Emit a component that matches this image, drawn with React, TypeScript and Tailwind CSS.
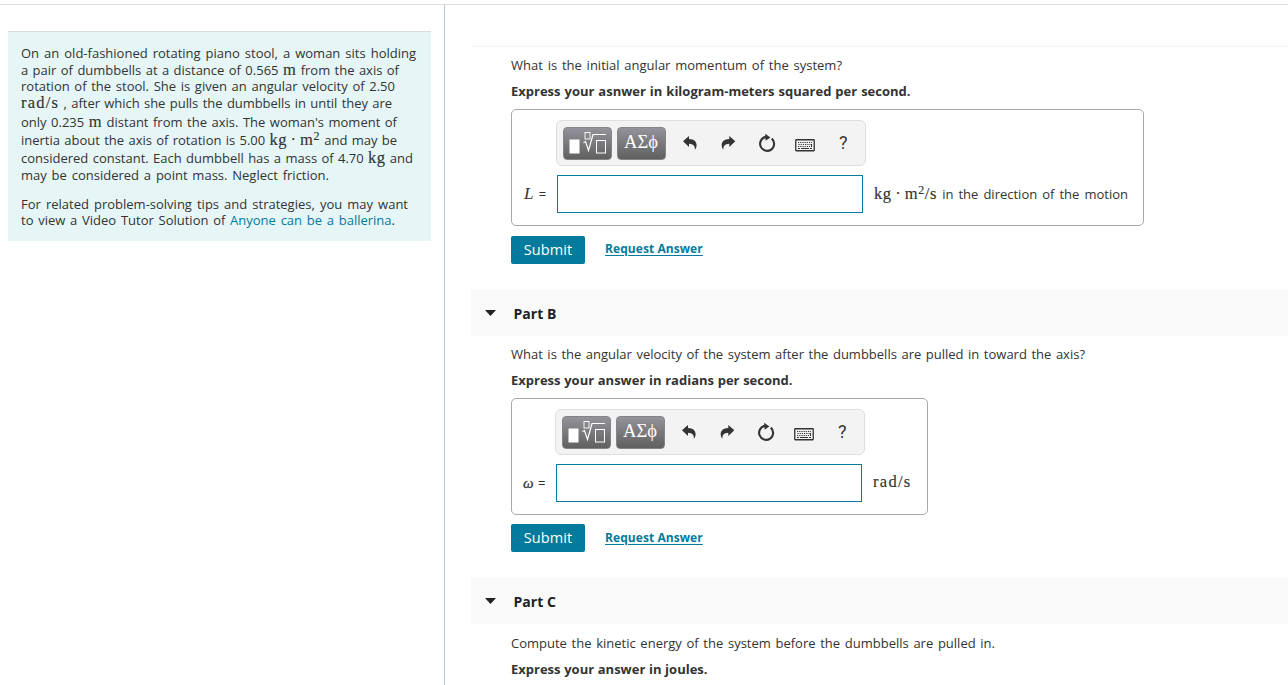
import type { ReactNode } from 'react';
import clsx from 'clsx';

function Line({ className, children }: { className: string; children: ReactNode }) {
  return (
    <div className={clsx('whitespace-nowrap leading-4 [text-align-last:justify]', className)}>
      {children}
    </div>
  );
}

function Unit({ className = 'tracking-[0.5px]', children }: { className?: string; children: ReactNode }) {
  return (
    <span
      className={clsx(
        "font-['Liberation_Serif',serif] text-[16.5px] leading-none [-webkit-text-stroke:0.15px_#333]",
        className
      )}
    >
      {children}
    </span>
  );
}

function KgM2() {
  return (
    <>
      kg<span className="px-[3.5px]">·</span>m
      <span className="relative -top-[5px] text-[12px] leading-none">2</span>
    </>
  );
}

function UndoIcon() {
  return (
    <svg width="16" height="16" viewBox="0 0 16 16" fill="#333">
      <path d="M1 6.2 7 1v3.1c5 .2 7.6 2.5 7.6 6.2 0 1.7-.6 3.200-1.700 4.500.3-3.800-1.400-5.800-5.900-6v3.100z" />
    </svg>
  );
}

function ResetIcon() {
  return (
    <svg width="18" height="20" viewBox="0 0 18 20">
      <path d="M13.800 5.600A7 7 0 1 1 8 3.900" fill="none" stroke="#333" strokeWidth="2.100" />
      <path d="M7.200 .8 12.400 4.400 7.600 7.800z" fill="#333" />
    </svg>
  );
}

function KeyboardIcon() {
  return (
    <svg width="20" height="13" viewBox="0 0 20 13" fill="none" stroke="#333">
      <rect x=".75" y=".75" width="18.500" height="11" rx=".5" strokeWidth="1.300" />
      <path d="M3 3.500h14M3.500 5.500h12" strokeWidth="1" strokeDasharray="1.200 1" />
      <path d="M3 7.500h12" strokeWidth="1" strokeDasharray="1.200 1" />
      <path d="M3 9.500h2M6 9.500h8M15 9.500h2M16.500 5v3" strokeWidth="1.100" />
    </svg>
  );
}

function Toolbar() {
  const button =
    'flex h-[33px] w-[49px] items-center justify-center rounded-[4px] border border-[#858588] bg-linear-to-b from-[#94939b] to-[#606060]';
  const slot = 'flex w-[38.3px] items-center justify-center';
  return (
    <div className="flex h-[46px] w-[310px] items-center rounded-[6px] border border-[#dedede] bg-[#f3f3f3] pl-[6px]">
      <button className={button}>
        <svg width="41" height="25" viewBox="0 0 41 25" fill="none" stroke="#fff" className="shrink-0">
          <rect x="2.500" y="8.500" width="10" height="14" fill="#fff" stroke="none" />
          <rect x="18" y="1.500" width="5" height="6.500" strokeWidth=".9" />
          <path d="M16.500 11.500 18.500 10.500 21.500 19.500 26 3.500H39" strokeWidth="1.200" />
          <rect x="29.500" y="9.500" width="9" height="12.500" />
        </svg>
      </button>
      <button className={clsx(button, 'ml-[5px]')}>
        <span className="pr-px pb-px font-['Liberation_Serif',serif] text-[18.5px] leading-none text-white">ΑΣϕ</span>
      </button>
      <div className="ml-[5px] flex h-full items-center">
        <span className={slot}>
          <UndoIcon />
        </span>
        <span className={clsx(slot, '-scale-x-100')}>
          <UndoIcon />
        </span>
        <span className={slot}>
          <ResetIcon />
        </span>
        <span className={clsx(slot, 'pt-1')}>
          <KeyboardIcon />
        </span>
        <span className={clsx(slot, "pb-[2px] font-['Roboto',sans-serif] text-[18px] text-[#333]")}>?</span>
      </div>
    </div>
  );
}

type AnswerProps = {
  label: ReactNode;
  unit: ReactNode;
  boxClass: string;
  actionsClass: string;
};

function Answer({ label, unit, boxClass, actionsClass }: AnswerProps) {
  return (
    <>
      <div className={clsx('mt-2 h-[117px] rounded-[5px] border border-[#a9a9a9] pt-[10px]', boxClass)}>
        <Toolbar />
        <div className="mt-[9px] flex h-[38px] items-center">
          {label}
          <input className="h-[38px] w-[306px] border border-[#047a9c] bg-white outline-none" />
          {unit}
        </div>
      </div>
      <div className={clsx('flex h-7 items-start', actionsClass)}>
        <button className="h-[28px] w-[74px] rounded-[2px] bg-[#047a9c] text-[14.5px] tracking-[0.05px] text-white">
          Submit
        </button>
        <a className="ml-5 pt-[5px] text-[12px] leading-4 font-bold tracking-[0.07px] whitespace-nowrap text-[#047a9c] underline underline-offset-2">
          Request Answer
        </a>
      </div>
    </>
  );
}

function PartHeader({ title }: { title: string }) {
  return (
    <div className="flex h-[46px] items-center bg-[#f9f9f9] pl-[14px]">
      <svg width="11" height="6" viewBox="0 0 11 6">
        <path d="M0 0H11L5.500 6z" fill="#222" />
      </svg>
      <h2 className="ml-[17.5px] text-[14px] font-bold tracking-[0.05px] text-[#222]">{title}</h2>
    </div>
  );
}

export default function App() {
  return (
    <div className="h-[685px] w-[1288px] overflow-hidden bg-white pt-1 font-['Open_Sans',sans-serif] text-[13px] text-[#333]">
      <div className="flex h-[681px] border-t border-[#dedede]">
        {/* Problem statement */}
        <aside className="w-[445px] shrink-0 border-r border-[#b9c6d6] pt-[26px] pl-2">
          <div className="h-[210px] w-[423px] border-t border-[#d6dede] bg-[#e6f6f7] pt-[13px] pl-[13px]">
            <Line className="h-[17px] w-[395px]">On an old-fashioned rotating piano stool, a woman sits holding</Line>
            <Line className="h-[16px] w-[378px]">
              a pair of dumbbells at a distance of 0.565 <Unit>m</Unit> from the axis of
            </Line>
            <Line className="h-[17px] w-[374px]">rotation of the stool. She is given an angular velocity of 2.50</Line>
            <Line className="h-[19px] w-[371px] tracking-[-0.06px]">
              <Unit className="tracking-[1.2px]">rad/s</Unit> , after which she pulls the dumbbells in until they are
            </Line>
            <Line className="h-[18px] w-[376px]">
              only 0.235 <Unit>m</Unit> distant from the axis. The woman's moment of
            </Line>
            <Line className="h-[18px] w-[376px]">
              inertia about the axis of rotation is 5.00{' '}
              <Unit>
                <KgM2 />
              </Unit>{' '}
              and may be
            </Line>
            <Line className="h-[17px] w-[392px]">
              considered constant. Each dumbbell has a mass of 4.70 <Unit>kg</Unit> and
            </Line>
            <Line className="h-[29px] w-[308px]">may be considered a point mass. Neglect friction.</Line>
            <Line className="h-[16px] w-[387px]">For related problem-solving tips and strategies, you may want</Line>
            <Line className="h-[16px] w-[374px]">
              to view a Video Tutor Solution of <a className="text-[#047a9c]">Anyone can be a ballerina</a>.
            </Line>
          </div>
        </aside>

        <main className="ml-[26px] flex-1">
          {/* Part A */}
          <section className="mt-[40px] border-t-2 border-[#f8f8f8] pt-2 pl-10">
            <Line className="h-[26px] w-[331px] pt-[2px]">What is the initial angular momentum of the system?</Line>
            <Line className="h-[20px] w-[399.5px] pt-[2px] font-bold">
              Express your asnwer in kilogram-meters squared per second.
            </Line>
            <Answer
              boxClass="w-[633px] pl-[44px] [&>div:last-child]:-ml-[44px]"
              actionsClass="mt-[10px]"
              label={
                <span className="w-[45px] pl-[12px]">
                  <i className="mr-[2px] font-['Liberation_Serif',serif] text-[17px]">L</i> =
                </span>
              }
              unit={
                <Line className="ml-[11px] w-[254px]">
                  <Unit className="tracking-[0.6px]">
                    <KgM2 />
                    /s
                  </Unit>{' '}
                  in the direction of the motion
                </Line>
              }
            />
          </section>

          {/* Part B */}
          <section className="mt-[26px]">
            <PartHeader title="Part B" />
            <div className="pt-2 pl-10">
              <Line className="h-[26px] w-[574px] pt-[2px]">
                What is the angular velocity of the system after the dumbbells are pulled in toward the axis?
              </Line>
              <Line className="h-[20px] w-[281.5px] pt-[2px] font-bold">Express your answer in radians per second.</Line>
              <Answer
                boxClass="w-[417px] pl-[43px] [&>div:last-child]:-ml-[43px]"
                actionsClass="mt-[9px] [&>a]:pt-[6px]"
                label={
                  <span className="w-[44px] pl-[11px]">
                    <i className="mr-px font-['Liberation_Serif',serif] text-[15px] [-webkit-text-stroke:0.25px_#333]">ω</i> =
                  </span>
                }
                unit={
                  <Line className="ml-[11px] w-[38px] pb-px">
                    <Unit className="tracking-[1.3px]">rad/s</Unit>
                  </Line>
                }
              />
            </div>
          </section>

          {/* Part C */}
          <section className="mt-[26px]">
            <PartHeader title="Part C" />
            <div className="pt-[9px] pl-10">
              <Line className="h-[26px] w-[484px] pt-[2px]">
                Compute the kinetic energy of the system before the dumbbells are pulled in.
              </Line>
              <Line className="h-[20px] w-[196.5px] pt-[2px] font-bold">Express your answer in joules.</Line>
            </div>
          </section>
        </main>
      </div>
    </div>
  );
}
